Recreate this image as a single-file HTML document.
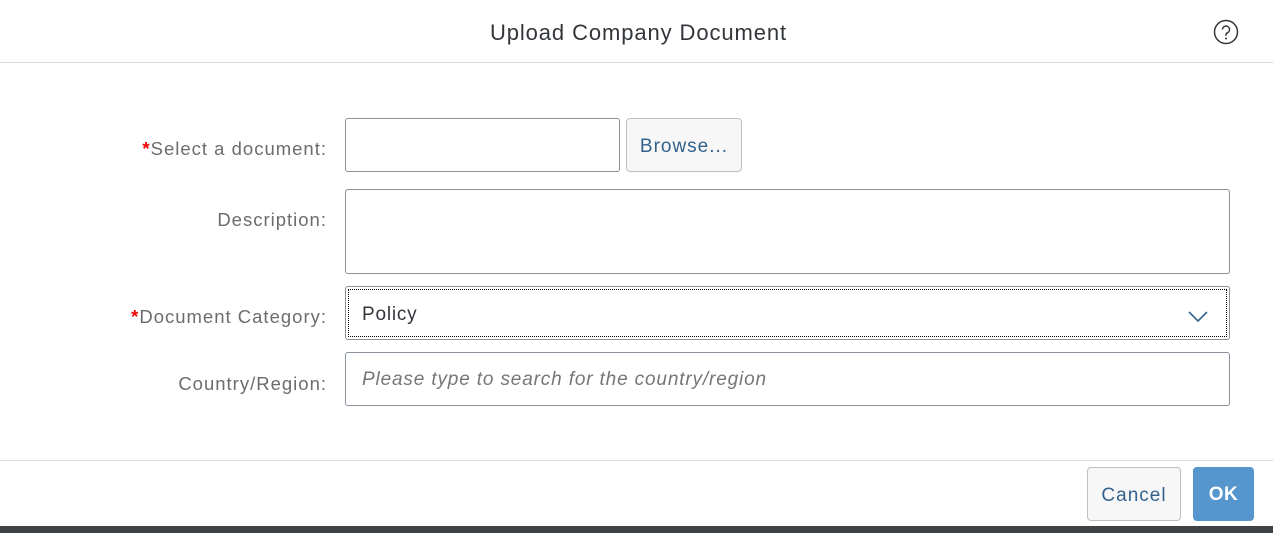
<!DOCTYPE html>
<html><head><style>
*{box-sizing:border-box;margin:0;padding:0}
body{width:1273px;height:533px;background:#fff;font-family:"Liberation Sans",Arial,sans-serif;position:relative;overflow:hidden}
.abs{position:absolute}
.lbl{position:absolute;right:946px;font-size:18.5px;letter-spacing:1px;color:#6a6d70;text-align:right;white-space:nowrap}
.req{color:#e00;font-weight:bold}
.inp{position:absolute;border:1px solid #89919a;border-radius:3px;background:#fff}
</style></head><body>
<div class="abs" style="left:0;top:0;width:1273px;height:63px;border-bottom:1px solid #d9d9d9"></div>
<div class="abs" style="left:0;top:20px;width:1277px;text-align:center;font-size:22px;letter-spacing:0.9px;color:#32363a">Upload Company Document</div>
<svg class="abs" style="left:1213px;top:19px" width="26" height="26" viewBox="0 0 26 26"><circle cx="13" cy="13" r="11.5" fill="none" stroke="#32363a" stroke-width="1.5"/><path d="M9.5 10.5a3.5 3.5 0 1 1 5 3.2c-1 .5-1.5 1.2-1.5 2.3v.8" fill="none" stroke="#32363a" stroke-width="1.5"/><circle cx="13" cy="19.5" r="1" fill="#32363a"/></svg>

<div class="lbl" style="top:138px"><span class="req">*</span>Select a document:</div>
<div class="inp" style="left:345px;top:118px;width:275px;height:54px"></div>
<div class="abs" style="left:626px;top:118px;width:116px;height:54px;border:1px solid #bfbfbf;border-radius:4px;background:#f7f7f7;color:#32628c;font-size:19px;letter-spacing:1px;text-align:center;line-height:55px">Browse...</div>

<div class="lbl" style="top:209px">Description:</div>
<div class="inp" style="left:345px;top:189px;width:885px;height:85px"></div>

<div class="lbl" style="top:306px"><span class="req">*</span>Document Category:</div>
<div class="inp" style="left:345px;top:286px;width:885px;height:54px"><div style="position:absolute;left:2px;top:2px;right:2px;bottom:2px;border:1px dotted #000"></div></div>
<div class="abs" style="left:362px;top:304px;font-size:19px;letter-spacing:0.8px;color:#32363a">Policy</div>
<svg class="abs" style="left:1187px;top:309px" width="22" height="14" viewBox="0 0 22 14"><path d="M2 3l9 9 9-9" fill="none" stroke="#32628c" stroke-width="1.6"/></svg>

<div class="lbl" style="top:373px">Country/Region:</div>
<div class="inp" style="left:345px;top:352px;width:885px;height:54px"></div>
<div class="abs" style="left:362px;top:369px;font-size:19px;letter-spacing:0.85px;color:#74777a;font-style:italic">Please type to search for the country/region</div>

<div class="abs" style="left:0;top:460px;width:1273px;height:1px;background:#d9d9d9"></div>
<div class="abs" style="left:1087px;top:467px;width:94px;height:54px;border:1px solid #bfbfbf;border-radius:4px;background:#f7f7f7;color:#32628c;font-size:19px;letter-spacing:1px;text-align:center;line-height:55px">Cancel</div>
<div class="abs" style="left:1193px;top:467px;width:61px;height:54px;border-radius:4px;background:#5496cd;color:#fff;font-size:19px;font-weight:bold;letter-spacing:0.5px;text-align:center;line-height:56px">OK</div>
<div class="abs" style="left:0;top:526px;width:1273px;height:7px;background:#3f4245"></div>
</body></html>
